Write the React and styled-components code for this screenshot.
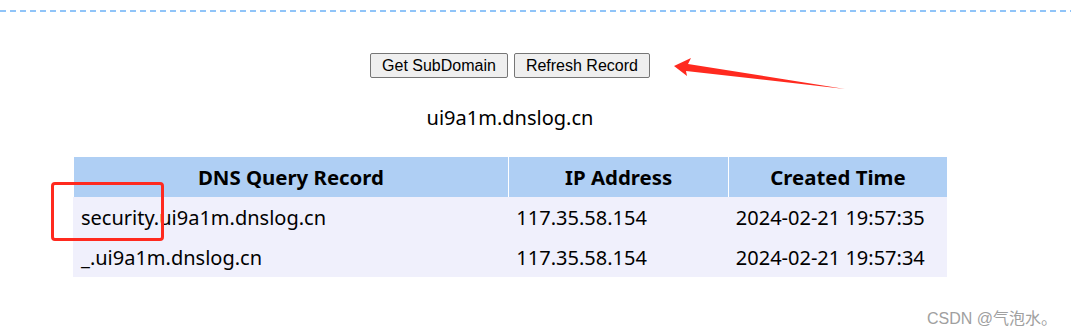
import React from "react";
import styled, { createGlobalStyle } from "styled-components";

const records = [
  { host: "security.ui9a1m.dnslog.cn", ip: "117.35.58.154", time: "2024-02-21 19:57:35" },
  { host: "_.ui9a1m.dnslog.cn", ip: "117.35.58.154", time: "2024-02-21 19:57:34" },
];

const App = () => {
  return (
    <>
      <GlobalStyle />
      <Page>
        <Divider />
        <Content>
          <BtnRow>
            <Btn type="button">Get SubDomain</Btn>
            <Btn type="button">Refresh Record</Btn>
          </BtnRow>
          <Domain>ui9a1m.dnslog.cn</Domain>
          <Table>
            <thead>
              <tr>
                <Th width="436">DNS Query Record</Th>
                <Th width="219">IP Address</Th>
                <Th width="219">Created Time</Th>
              </tr>
            </thead>
            <tbody>
              {records.map((r) => (
                <tr key={r.host}>
                  <Td>{r.host}</Td>
                  <Td>{r.ip}</Td>
                  <Td>{r.time}</Td>
                </tr>
              ))}
            </tbody>
          </Table>
        </Content>

        {/* annotations drawn over the screenshot */}
        <Arrow width="180" height="40" viewBox="670 52 180 40">
          <polygon
            points="674,66 691,58 688,64 845,89 686,71 687,76"
            fill="#ff2a1f"
          />
        </Arrow>
        <Highlight />
        <Watermark>CSDN @气泡水。</Watermark>
      </Page>
    </>
  );
};

const GlobalStyle = createGlobalStyle`
  html, body {
    margin: 0;
    padding: 0;
    background: #fff;
  }
  body {
    font-family: "Noto Sans", "Open Sans", sans-serif;
    color: #000;
  }
`;

const Page = styled.div`
  position: relative;
  width: 1071px;
  height: 336px;
  padding-top: 10px;
  box-sizing: border-box;
  overflow: hidden;
`;

const Divider = styled.div`
  height: 2px;
  background: repeating-linear-gradient(
    to right,
    #90c4f8 0 6px,
    transparent 6px 10px
  );
`;

const Content = styled.div`
  width: 1020px;
  display: flex;
  flex-direction: column;
  align-items: center;
`;

const BtnRow = styled.div`
  display: flex;
  gap: 6px;
  margin-top: 41px;
`;

const Btn = styled.button`
  height: 25px;
  padding: 0 11px;
  font-family: "Liberation Sans", Arial, sans-serif;
  font-size: 16px;
  color: #000;
  background: #efefef;
  border: 1px solid #767676;
  border-radius: 2px;
`;

const Domain = styled.div`
  margin-top: 27px;
  font-size: 20px;
  line-height: 26px;
`;

const Table = styled.table`
  margin-top: 26px;
  width: 874px;
  border-collapse: collapse;
  font-size: 20px;
`;

const Th = styled.th`
  width: ${(p) => p.width}px;
  height: 40px;
  padding: 0;
  background: #afcff4;
  font-size: 20.4px;
  font-weight: 700;
  text-align: center;
  border-left: 1px solid #fff;
  &:first-child {
    border-left: none;
  }
`;

const Td = styled.td`
  height: 40px;
  padding: 0 0 0 7px;
  background: #f0f0fc;
  text-align: left;
  border-left: 1px solid #f0f0fc;
`;

const Arrow = styled.svg`
  position: absolute;
  left: 670px;
  top: 52px;
`;

const Highlight = styled.div`
  position: absolute;
  left: 51px;
  top: 182px;
  width: 113px;
  height: 59px;
  box-sizing: border-box;
  border: 3.5px solid #ff2a1f;
  border-radius: 4px;
`;

const Watermark = styled.div`
  position: absolute;
  right: 14px;
  top: 305px;
  font-family: "Liberation Sans", "Noto Sans CJK SC", sans-serif;
  font-size: 16px;
  color: #a0a0a0;
  white-space: nowrap;
`;

export default App;
